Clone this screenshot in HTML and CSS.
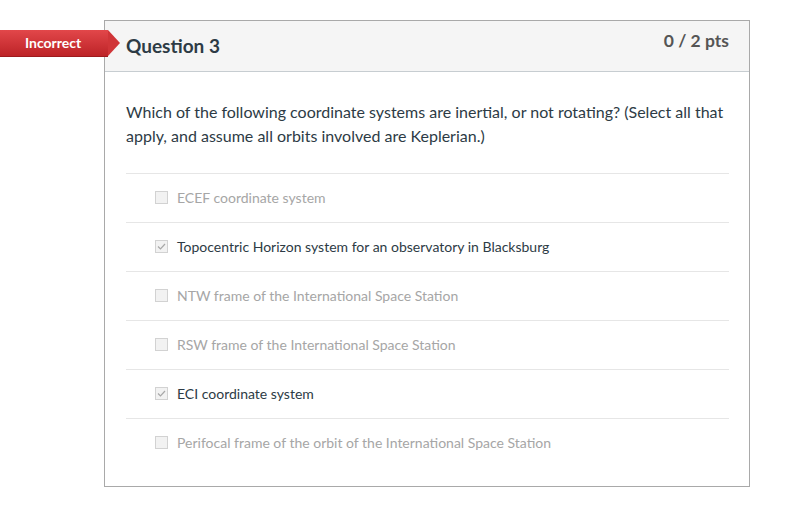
FILE: index.html
```html
<!DOCTYPE html>
<html>
<head>
<meta charset="utf-8">
<link rel="stylesheet" href="styles.css">
</head>
<body>
<div class="page">
  <div class="badge"><span class="badge-text">Incorrect</span></div>
  <div class="card">
    <div class="card-header">
      <h2 class="title">Question 3</h2>
      <span class="pts">0 / 2 pts</span>
    </div>
    <div class="card-body">
      <p class="question">Which of the following coordinate systems are inertial, or not rotating? (Select all that apply, and assume all orbits involved are Keplerian.)</p>
      <ul class="answers">
        <li class="answer"><span class="box"></span><span class="label">ECEF coordinate system</span></li>
        <li class="answer selected"><span class="box checked"><svg viewBox="0 0 13 13" width="13" height="13"><path d="M3 6.5 L5.5 9 L10 4" fill="none" stroke="#a8a8a8" stroke-width="1.2"/></svg></span><span class="label">Topocentric Horizon system for an observatory in Blacksburg</span></li>
        <li class="answer"><span class="box"></span><span class="label">NTW frame of the International Space Station</span></li>
        <li class="answer"><span class="box"></span><span class="label">RSW frame of the International Space Station</span></li>
        <li class="answer selected"><span class="box checked"><svg viewBox="0 0 13 13" width="13" height="13"><path d="M3 6.5 L5.5 9 L10 4" fill="none" stroke="#a8a8a8" stroke-width="1.2"/></svg></span><span class="label">ECI coordinate system</span></li>
        <li class="answer"><span class="box"></span><span class="label">Perifocal frame of the orbit of the International Space Station</span></li>
      </ul>
    </div>
  </div>
</div>
</body>
</html>
```

FILE: styles.css
```css
* { box-sizing: border-box; }
body {
  margin: 0;
  background: #fff;
  font-family: Lato, "Open Sans", sans-serif;
  color: #2d3b45;
}
.page {
  position: relative;
  padding: 20px 0 0 104px;
}
.badge {
  position: absolute;
  left: 0;
  top: 30px;
  width: 108px;
  height: 27px;
  background: linear-gradient(#e2474a, #bd2327);
  border-bottom: 1px solid #9e1a1d;
  display: flex;
  align-items: center;
  padding-left: 25px;
  padding-bottom: 2px;
}
.badge::after {
  content: "";
  position: absolute;
  right: -12px;
  top: 0;
  width: 0;
  height: 0;
  border-top: 13.5px solid transparent;
  border-bottom: 13.5px solid transparent;
  border-left: 12px solid #d03538;
}
.badge-text {
  color: #fff;
  font-weight: 700;
  font-size: 14px;
}
.card {
  width: 646px;
  border: 1px solid #a9a9a9;
}
.card-header {
  height: 51px;
  background: #f5f5f5;
  border-bottom: 1px solid #c7cdd1;
  display: flex;
  justify-content: space-between;
  align-items: flex-start;
  padding: 0 20px 0 21px;
}
.title {
  margin: 0;
  font-size: 19px;
  font-weight: 700;
  line-height: 22px;
  padding-top: 14px;
  color: #2d3b45;
}
.pts {
  font-size: 17.5px;
  font-weight: 700;
  color: #555;
  line-height: 20px;
  padding-top: 10px;
}
.card-body {
  padding: 28px 20px 19px 21px;
}
.question {
  margin: 0 0 25px;
  font-size: 16px;
  line-height: 24px;
}
.answers {
  list-style: none;
  margin: 0;
  padding: 0;
}
.answer {
  height: 49px;
  border-top: 1px solid #e6e6e6;
  display: flex;
  align-items: center;
  padding-left: 29px;
  padding-bottom: 2px;
  font-size: 14px;
  color: #a6a6a6;
}
.answer.selected { color: #2d3b45; }
.box {
  width: 13px;
  height: 13px;
  border: 1px solid #d2d2d2;
  background: #f2f2f2;
  margin-right: 9px;
  display: flex;
  align-items: center;
  justify-content: center;
  flex: none;
}
.box svg { display: block; margin: -1px; }
```
